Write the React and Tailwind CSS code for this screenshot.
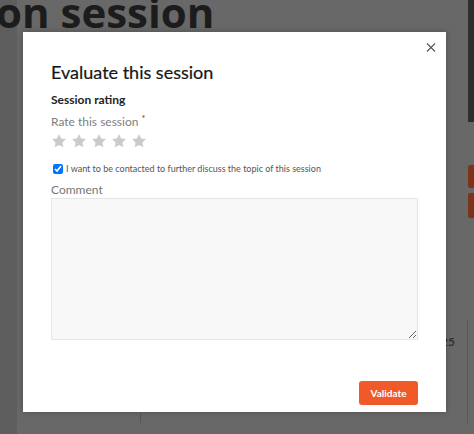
import React from 'react';

const Star = () => (
  <svg width="16" height="16" viewBox="0 0 24 24" className="shrink-0">
    <path
      d="M12 1.5l3.2 6.6 7.2 1-5.2 5.1 1.3 7.2L12 18l-6.5 3.4 1.3-7.2L1.6 9.1l7.2-1L12 1.5z"
      fill="#cbcbcb"
    />
  </svg>
);

const EvaluateModal = () => (
  <div className="absolute left-[23px] top-[32px] w-[423px] h-[380px] bg-white shadow-[0_0_6px_rgba(0,0,0,0.25)] font-['Lato',sans-serif] px-7 pt-[29px] flex flex-col">
    <button className="absolute right-[10px] top-[10px] w-[10px] h-[10px] flex items-center justify-center">
      <svg width="10" height="9" viewBox="0 0 10 9">
        <path d="M1 0.5l8 8M9 0.5l-8 8" stroke="#555" strokeWidth="1.1" />
      </svg>
    </button>

    <h2 className="text-[18px] leading-[22px] text-[#161616] [-webkit-text-stroke:0.2px_#161616]">Evaluate this session</h2>

    <h3 className="mt-[9px] text-[12px] leading-[16px] font-bold text-[#222]">Session rating</h3>

    <div className="mt-[6px] text-[12px] leading-[16px] text-[#808080]">
      Rate this session <sup className="text-[9px] text-[#444]">*</sup>
    </div>

    <div className="mt-[3px] flex gap-[4px]">
      <Star />
      <Star />
      <Star />
      <Star />
      <Star />
    </div>

    <label className="mt-[14px] flex items-center gap-[3px] text-[9px] leading-[12px] text-[#555]">
      <input type="checkbox" defaultChecked className="w-[10px] h-[10px] m-0 ml-[2px]" />
      I want to be contacted to further discuss the topic of this session
    </label>

    <div className="mt-[7px] text-[12px] leading-[16px] text-[#777]">Comment</div>

    <textarea className="w-full h-[142px] bg-[#f8f8f8] border border-[#e6e6e6] outline-none" />

    <div className="mt-[41px] flex justify-end">
      <button className="w-[59px] h-[24px] rounded-[3px] bg-[#f05a28] text-white text-[10px] font-bold">
        Validate
      </button>
    </div>
  </div>
);

export default function App() {
  return (
    <div className="relative w-[474px] h-[434px] overflow-hidden bg-[#686868] flex">
      <div className="w-[17px] shrink-0 bg-[#5e5e5e]" />

      <div className="flex-1 flex flex-col">
        <h1 className="-ml-[21px] -mt-[9px] h-[42px] text-[42px] leading-[42px] font-bold text-[#1c1c1c] font-['Open_Sans',sans-serif] whitespace-nowrap">
          on session
        </h1>
        <div className="mt-[287px] flex items-start">
          <div className="w-[123px]" />
          <div className="mt-[93px] w-px h-[10px] bg-[#555]" />
          <div className="flex-1" />
          <div className="mt-[16px] mr-[12px] text-[12px] leading-[12px] font-bold text-[#333] font-['Lato',sans-serif]">25</div>
          <div className="w-px h-[103px] bg-[#575757]" />
        </div>
      </div>

      <div className="w-[6px] shrink-0 flex flex-col">
        <div className="h-[122px] bg-[#2e2e2e]" />
        <div className="mt-[43px] h-[23px] bg-[#7a3519] rounded-l-[2px]" />
        <div className="mt-[5px] h-[25px] bg-[#7a3519] rounded-l-[2px]" />
      </div>

      <EvaluateModal />
    </div>
  );
}
